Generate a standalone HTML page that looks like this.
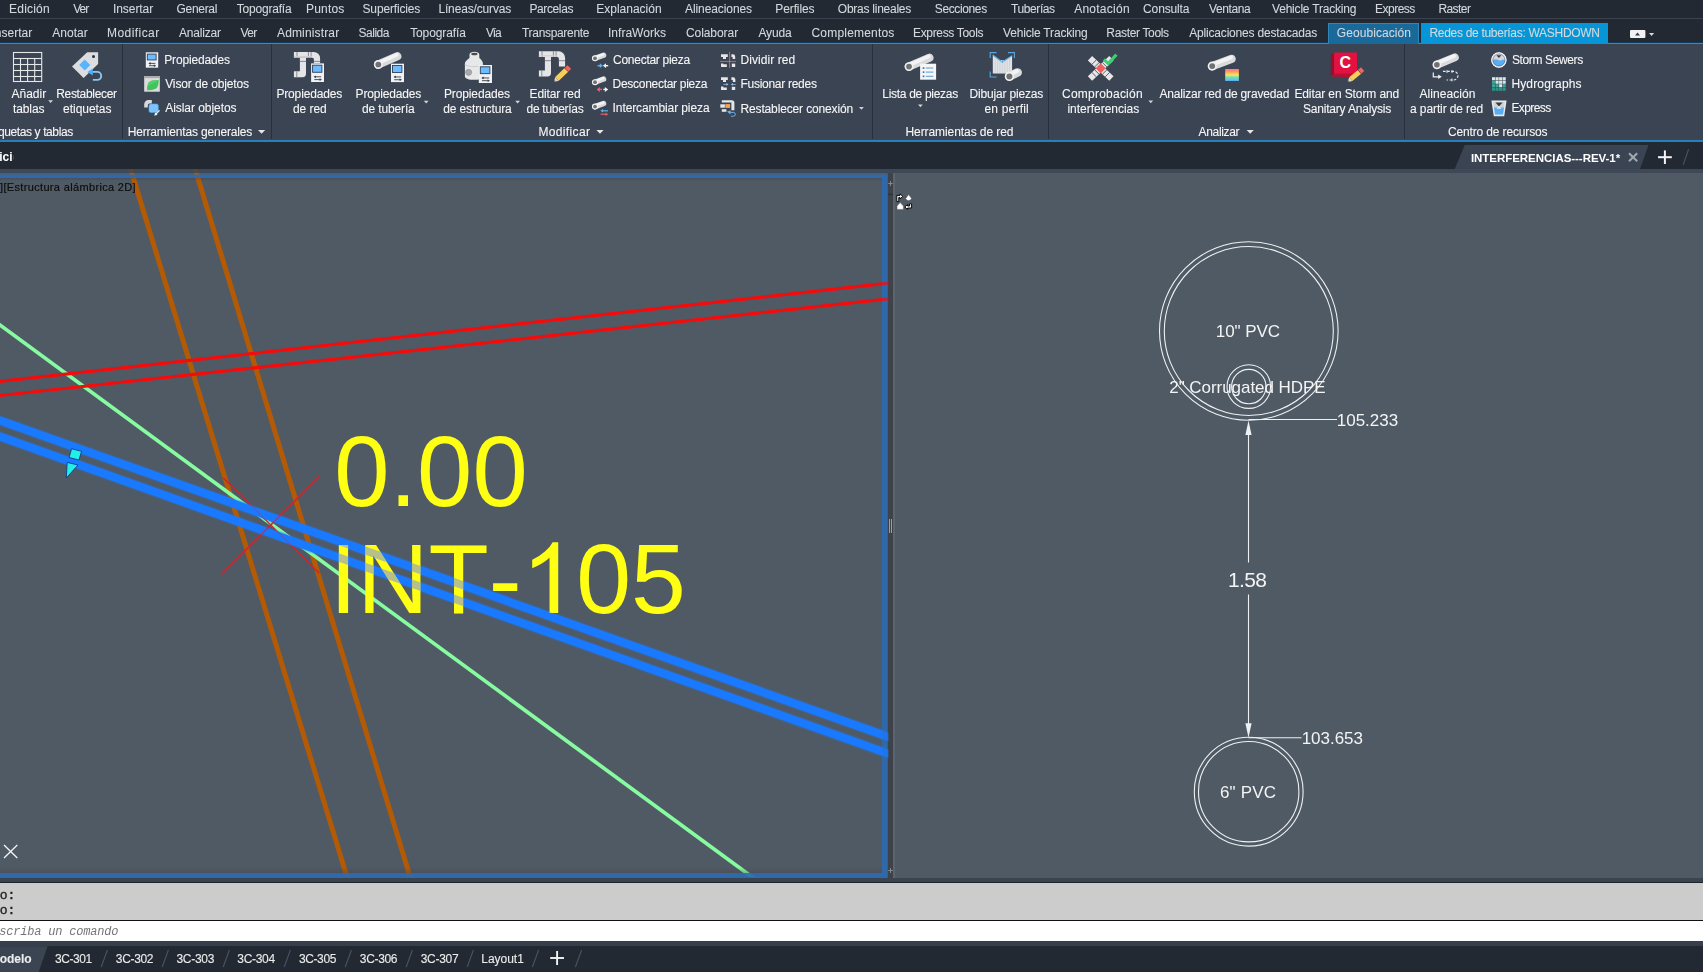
<!DOCTYPE html>
<html lang="es"><head><meta charset="utf-8"><title>Autodesk Civil 3D - INTERFERENCIAS---REV-1</title>
<style>
html,body{margin:0;padding:0;}
body{width:1703px;height:972px;overflow:hidden;position:relative;background:#222933;font-family:"Liberation Sans",sans-serif;font-size:12px;color:#f0f0f0;}
div,span,svg{position:absolute;box-sizing:border-box;}
.t{white-space:pre;line-height:1;font-family:"Liberation Sans",sans-serif;}
.m1,.m2{color:#d4d8dd;-webkit-text-stroke:0.08px #d4d8dd;}
.rb{color:#f6f6f6;-webkit-text-stroke:0.1px #f6f6f6;}
.ft{color:#ffffff;}
.vl{color:#0c0c0c;-webkit-text-stroke:0.15px #0c0c0c;}
.cm{color:#1c1c1c;-webkit-text-stroke:0.35px #1c1c1c;}
.cp{color:#757575;}
.bt{color:#ececec;-webkit-text-stroke:0.1px #ececec;}
.dv{color:#f4f4f4;}
#menubar{left:0;top:0;width:1703px;height:19px;background:#222933;border-bottom:1px solid #3a424e;}
#tabrow{left:0;top:19px;width:1703px;height:25px;}
.tab{top:4px;height:21px;}
#tab-geo{left:1328px;width:91px;background:#19699b;border:1px solid #2f86b8;border-bottom:none;}
#tab-ctx{left:1421px;width:187px;background:#0696d7;}
#ribbon{left:0;top:44px;width:1703px;height:98px;background:#3b4453;}
#tabline{left:0;top:42px;width:1703px;height:2px;background:#4586b2;border-top:1px solid #0c3c60;}
#ribbon .sep{top:0px;width:1px;height:96px;background:#29303b;}
#ribbon-line{left:0;top:139px;width:1703px;height:3px;background:#2580bc;border-top:1px solid #1d4f78;}
#filetabs{left:0;top:142px;width:1703px;height:27px;background:#222933;}
#gap1{left:0;top:169px;width:1703px;height:4px;background:rgba(59,68,83,0.8);}
#workspace{left:0;top:169px;width:1703px;height:709px;background:#4f5a65;overflow:hidden;}
#vp-left{left:-5px;top:175px;width:892px;height:703px;border:5px solid rgba(44,108,176,0.93);border-top-width:3px;}
#vp-halo{left:0;top:173px;width:887px;height:2px;background:linear-gradient(rgba(44,108,176,0.25),rgba(44,108,176,0.55));}
#vp-shadow{left:0;top:178px;width:882px;height:3px;background:linear-gradient(rgba(60,50,60,0.28),rgba(60,50,60,0));}
#vp-shadow2{left:0;top:867px;width:882px;height:6px;background:linear-gradient(rgba(70,60,60,0),rgba(70,60,60,0.3));}
#splitter{left:888px;top:173px;width:5px;height:705px;background:#3f4248;}
#splitter2{left:893px;top:173px;width:2px;height:705px;background:#5a6570;}
#below{left:0;top:878px;width:1703px;height:5px;background:#3a434e;border-bottom:1px solid #1e232b;}
#cmdhist{left:0;top:883px;width:1703px;height:37px;background:#cccccc;}
#cmdsep{left:0;top:920px;width:1703px;height:1px;background:#111;}
#cmdline{left:0;top:921px;width:1703px;height:20px;background:#ffffff;}
#status-top{left:0;top:941px;width:1703px;height:5px;background:#363f4b;}
#layouttabs{left:0;top:946px;width:1703px;height:26px;background:#222933;}
#grip{left:889px;top:519px;width:3px;height:14px;border-left:1px solid #9a9ea4;border-right:1px solid #9a9ea4;}
#labels{left:0;top:0;width:1703px;height:972px;will-change:transform;}

</style></head>
<body>
<div id="menubar"></div>
<div id="tabline"></div>
<div id="tabrow">
  <div class="tab" id="tab-geo"></div>
  <div class="tab" id="tab-ctx"></div>
</div>
<div id="ribbon">
  <div class="sep" style="left:122px"></div>
  <div class="sep" style="left:271px"></div>
  <div class="sep" style="left:872px"></div>
  <div class="sep" style="left:1048px"></div>
  <div class="sep" style="left:1404px"></div>
</div>
<div id="ribbon-line"></div>
<div id="filetabs"></div>
<div id="workspace"></div>
<div id="below"></div>
<div id="cmdhist"></div>
<div id="cmdsep"></div>
<div id="cmdline"></div>
<div id="status-top"></div>
<div id="layouttabs"></div>

<svg id="model" width="1703" height="972" viewBox="0 0 1703 972" style="left:0;top:0">
  <defs>
    <clipPath id="clipL"><rect x="0" y="169" width="886" height="708"/></clipPath>
    <clipPath id="clipR"><rect x="895" y="173" width="808" height="705"/></clipPath>
    <clipPath id="clipTxt" font-family="Liberation Sans, sans-serif" font-size="98.6">
      <text x="334.2 389.5 417.1 472.4" y="506" font-size="99.4">0.00</text>
      <text x="329.80 357.21 428.40 488.64" y="613">INT-</text>
      <path transform="translate(521.48,613) scale(0.04814,-0.04814)" d="M763 0H583V1147Q518 1085 412.5 1023Q307 961 223 930V1104Q374 1175 487 1276Q600 1377 647 1472H763Z"/>
      <text x="576.30 631.12" y="613">05</text>
    </clipPath>
  </defs>
  <g clip-path="url(#clipL)" fill="none" stroke-linecap="butt">
    <g stroke="#b45a04" stroke-width="5">
      <line x1="130.6" y1="169" x2="347.3" y2="878"/>
      <line x1="195.2" y1="169" x2="410.4" y2="878"/>
    </g>
    <line x1="-10" y1="317.7" x2="760" y2="882.8" stroke="#86fba0" stroke-width="3.7"/>
    <g stroke="#d4232f" stroke-width="1.35">
      <line x1="221.2" y1="574.5" x2="319.2" y2="476.5"/>
      <line x1="223.2" y1="477.8" x2="319.2" y2="573.2"/>
    </g>
    <g stroke="#1a7aff" stroke-width="10.4" opacity="0.28"><line x1="-10" y1="416.84" x2="897" y2="740"/><line x1="-10" y1="433.03" x2="897" y2="756.8"/></g>
    <g stroke="#1a7aff" stroke-width="8"><line x1="-10" y1="416.84" x2="897" y2="740"/><line x1="-10" y1="433.03" x2="897" y2="756.8"/></g>
    <g stroke="#f40c0c" stroke-width="3.2">
      <line x1="-10" y1="382.5" x2="895" y2="282.4"/>
      <line x1="-10" y1="396.6" x2="895" y2="298.2"/>
    </g>
    
    <g stroke="#d4232f" stroke-width="1.35">
      <line x1="221.2" y1="574.5" x2="319.2" y2="476.5" opacity="0.7"/>
      <line x1="223.2" y1="477.8" x2="319.2" y2="573.2" opacity="0.3"/>
    </g>
    <g stroke="#0b2f8a" stroke-width="0.8" fill="#22efe6">
      <polygon points="71.6,448.8 81.5,451.3 79,460 69.1,457.5"/>
      <polygon points="67.2,462.4 78,465 66.3,478"/>
    </g>
    <g fill="#ffff14" stroke="none" font-family="Liberation Sans, sans-serif" font-size="98.6">
      <text x="334.2 389.5 417.1 472.4" y="506" font-size="99.4">0.00</text>
      <text x="329.80 357.21 428.40 488.64" y="613">INT-</text>
      <path transform="translate(521.48,613) scale(0.04814,-0.04814)" d="M763 0H583V1147Q518 1085 412.5 1023Q307 961 223 930V1104Q374 1175 487 1276Q600 1377 647 1472H763Z"/>
      <text x="576.30 631.12" y="613">05</text>
    </g>
    <g clip-path="url(#clipTxt)"><g stroke="#7c8cea" stroke-width="8" opacity="0.55"><line x1="-10" y1="416.84" x2="897" y2="740"/><line x1="-10" y1="433.03" x2="897" y2="756.8"/></g></g>
    <g stroke="#f2f4f6" stroke-width="1.3"><line x1="4" y1="845" x2="17.3" y2="858"/><line x1="17.3" y1="845" x2="4" y2="858"/></g>
  </g>
  <g clip-path="url(#clipR)" fill="none" stroke="#eef0f2" stroke-width="1.1">
    <circle cx="1248.8" cy="331" r="89.3"/>
    <circle cx="1248.8" cy="331" r="84.5"/>
    <circle cx="1248.8" cy="386.6" r="21.8"/>
    <circle cx="1248.8" cy="386.6" r="17.2"/>
    <line x1="1248.5" y1="419.5" x2="1337" y2="419.5"/>
    <line x1="1248.5" y1="434" x2="1248.5" y2="562.5"/>
    <line x1="1248.5" y1="594.5" x2="1248.5" y2="724"/>
    <polygon points="1248.5,420.5 1251.6,435 1245.4,435" fill="#eef0f2" stroke="none"/>
    <polygon points="1248.5,737.8 1251.6,723.3 1245.4,723.3" fill="#eef0f2" stroke="none"/>
    <line x1="1248.5" y1="737.8" x2="1301.5" y2="737.8"/>
    <circle cx="1248.7" cy="791.7" r="54.4"/>
    <circle cx="1248.7" cy="791.7" r="50.2"/>
  </g>
</svg>
<div id="gap1"></div>
<div id="vp-left"></div><div id="vp-halo"></div><div id="vp-shadow"></div><div id="vp-shadow2"></div>
<div id="splitter"></div>
<div id="splitter2"></div>
<div id="grip"></div>
<svg id="overborder" width="1703" height="972" viewBox="0 0 1703 972" style="left:0;top:0">
  <defs><clipPath id="clipB"><rect x="881" y="178" width="7.4" height="695"/></clipPath></defs>
  <g clip-path="url(#clipB)" fill="none" opacity="0.72">
    <g stroke="#f40c0c" stroke-width="3.2"><line x1="-10" y1="382.5" x2="895" y2="282.4"/><line x1="-10" y1="396.6" x2="895" y2="298.2"/></g>
    <g stroke="#1a7aff" stroke-width="8"><line x1="-10" y1="416.84" x2="897" y2="740"/><line x1="-10" y1="433.03" x2="897" y2="756.8"/></g>
  </g>
</svg>

<svg id="chrome" width="1703" height="972" viewBox="0 0 1703 972" style="left:0;top:0">
  <!-- file tab -->
  <polygon points="1464.7,145 1648.5,145 1640,169 1454.7,169" fill="#3b4453"/>
  <g stroke="#a2a8b0" stroke-width="2" stroke-linecap="butt"><line x1="1629" y1="153.3" x2="1637.2" y2="161.2"/><line x1="1637.2" y1="153.3" x2="1629" y2="161.2"/></g>
  <g stroke="#f4f4f4" stroke-width="2"><line x1="1658" y1="157.2" x2="1671.8" y2="157.2"/><line x1="1664.9" y1="150.4" x2="1664.9" y2="164"/></g>
  <line x1="1688.6" y1="149.3" x2="1683.2" y2="164.7" stroke="#4a5261" stroke-width="1.1"/>
  <!-- tab-row minimise toggle -->
  <rect x="1630" y="30" width="15.4" height="8" rx="1" fill="#f2f2f2"/><polygon points="1635,35.6 1640,35.6 1637.5,32.6" fill="#333a46"/>
  <polygon points="1649,33 1654.2,33 1651.6,36" fill="#d5d8dc"/>
  <!-- layout tabs -->
  <polygon points="0,946.3 47.6,946.3 38.7,972 0,972" fill="#3b4453"/>
  <g stroke="#4b5362" stroke-width="1.1">
    <line x1="107.4" y1="950" x2="101.2" y2="967"/><line x1="168.4" y1="950" x2="162.2" y2="967"/><line x1="229.4" y1="950" x2="223.2" y2="967"/>
    <line x1="290.4" y1="950" x2="284.2" y2="967"/><line x1="351.4" y1="950" x2="345.2" y2="967"/><line x1="412.4" y1="950" x2="406.2" y2="967"/>
    <line x1="473.4" y1="950" x2="467.2" y2="967"/><line x1="538.6" y1="950" x2="532.4" y2="967"/><line x1="581.6" y1="950" x2="575.4" y2="967"/>
  </g>
  <g stroke="#f4f4f4" stroke-width="1.9"><line x1="550.2" y1="958" x2="564" y2="958"/><line x1="557.1" y1="951" x2="557.1" y2="965"/></g>
  <!-- splitter marks -->
  <g stroke="#8a8e96" stroke-width="0.9"><line x1="888.2" y1="183.5" x2="892.8" y2="183.5"/><line x1="890.5" y1="181" x2="890.5" y2="186"/><line x1="888.2" y1="870.5" x2="892.8" y2="870.5"/><line x1="890.5" y1="868" x2="890.5" y2="873"/></g>
  <line x1="888" y1="194.3" x2="893" y2="194.3" stroke="#2c2f35" stroke-width="1"/>
  <!-- viewport cursor badge -->
  <g id="vpcursor" fill="#ffffff" stroke="#0a0a0a" stroke-width="1" stroke-linejoin="round">
    <path d="M896.8,201.6 v-6.2 h3.2 v-1.6 l2.8,2.6 -2.8,2.6 v-1.6 h-1.2 v4.2z"/>
    <path d="M905.6,198.6 l3,-4.2 l3,4.2 a3.2,3.2 0 0 1 -6,0z" stroke="#4f5a65" stroke-width="0.6"/>
    <path d="M897,206 l3.2,-3.6 3.2,3.6 v3.4 h-6.4z" stroke="#4f5a65" stroke-width="0.5"/>
    <path d="M911.6,203.8 v4.2 h-4 v1.6 l-2.8,-2.6 2.8,-2.6 v1.6 h2 v-2.2z"/>
  </g>
</svg>

<svg id="icons" width="1703" height="972" viewBox="0 0 1703 972" style="left:0;top:0" shape-rendering="geometricPrecision">
<g id="ic-table" stroke="#e6e7e9" stroke-width="1.1" fill="none">
<rect x="13.5" y="52.5" width="28.2" height="29"/>
<line x1="13.5" y1="58.5" x2="41.7" y2="58.5"/>
<line x1="13.5" y1="64.5" x2="41.7" y2="64.5"/>
<line x1="13.5" y1="70.5" x2="41.7" y2="70.5"/>
<line x1="13.5" y1="76.5" x2="41.7" y2="76.5"/>
<line x1="20.5" y1="58.5" x2="20.5" y2="81.5"/>
<line x1="27.6" y1="58.5" x2="27.6" y2="81.5"/>
<line x1="34.7" y1="58.5" x2="34.7" y2="81.5"/>
</g>
<g id="ic-tag">
<polygon points="98.1,52.3 87.2,52.3 72,66.4 83.6,78.1 98.1,64" fill="#dcdde0"/>
<circle cx="93.5" cy="56.6" r="1.5" fill="#2b2f38"/>
<polygon points="84.7,59.5 90.3,65 84.8,70.6 79.2,65" fill="#58b4ff"/>
<path d="M92.2,71.9 h5 a4,4 0 0 1 0,8 h-4.4" fill="none" stroke="#8cc6ee" stroke-width="1.9"/>
<polygon points="87.3,72 92.8,68.6 92.8,75.4" fill="#4aaef8"/>
</g>
<g id="ic-prop"><rect x="145.8" y="52.3" width="12.4" height="15.4" fill="#f1f2f4"/><rect x="147.3" y="54.099999999999994" width="8.8" height="5.85" fill="#6cbcff" stroke="#2f3f58" stroke-width="0.9"/><g stroke="#3a3f48" stroke-width="0.9" fill="#3a3f48"><line x1="149.0" y1="63.39" x2="155.4" y2="63.39"/><line x1="149.0" y1="65.70" x2="155.4" y2="65.70"/><polygon points="148.4,63.39 150.60000000000002,61.99 150.60000000000002,64.79" stroke="none"/><polygon points="156.00000000000003,65.70 153.8,64.30 153.8,67.10" stroke="none"/></g></g>
<g id="ic-visor"><rect x="144.2" y="76.1" width="15.6" height="15.6" fill="#dcdcde"/><rect x="144.2" y="76.1" width="15.6" height="2" fill="#a9aaad"/>
<path d="M158.6,80 c-4,-0.2 -8.6,0.4 -10,2.6 c-1.4,2.4 -1.6,5.2 -1.5,7.6 c4,0.3 8.4,-0.3 10,-2.6 c1.3,-2.2 1.6,-5 1.5,-7.6z" fill="#43c35a"/><path d="M158.6,80 c-4,-0.2 -8.6,0.4 -10,2.6 l-1,4 c3,-3 8,-3.4 11,-6.6z" fill="#5fd873" opacity="0.6"/></g>
<g id="ic-aislar"><path d="M144.2,107.6 v-3.2 a4.4,4.4 0 0 1 4.4,-4.4 h3.2 v3.6 h-2.4 a1.6,1.6 0 0 0 -1.6,1.6 v2.4z" fill="#d9dadc"/>
<rect x="149" y="104" width="9.3" height="8.6" rx="1.8" fill="#7cc3ff"/><rect x="149" y="104" width="9.3" height="8.6" rx="1.8" fill="none" stroke="#5aa6e8" stroke-width="0.6"/>
<line x1="159.6" y1="110.3" x2="155.6" y2="114.4" stroke="#f4f4f4" stroke-width="1.2"/><polygon points="154.2,115.8 155.2,112.4 157.6,114.8" fill="#f4f4f4"/></g>
<g id="ic-netprop"><g fill="#e4e5e7"><path d="M293.9,52 H313.70 A6.4,6.4 0 0 1 320.10,58.40 V63.20 H313.90 V59.60 A1.7,1.7 0 0 0 312.20,57.80 H293.9 Z"/><path d="M299.90,57.80 H306.00 V73.80 A3.4,3.4 0 0 1 302.60,77.20 H293.9 V71.30 H299.90 Z"/></g><g stroke="#7d7f84" stroke-width="0.9"><line x1="297.00" y1="52" x2="297.00" y2="57.80"/><line x1="308.40" y1="52" x2="308.40" y2="57.80"/><line x1="311.10" y1="52" x2="311.10" y2="57.80"/><line x1="299.90" y1="61.40" x2="306.00" y2="61.40"/><line x1="313.90" y1="61.40" x2="320.10" y2="61.40"/><line x1="296.80" y1="71.30" x2="296.80" y2="77.20"/></g><path d="M293.9,56.50 H312.20" stroke="#cfd0d3" stroke-width="1.2" fill="none"/><rect x="311.1" y="63.4" width="12.9" height="18.6" fill="#f1f2f4"/><rect x="312.6" y="65.2" width="9.3" height="7.07" fill="#6cbcff" stroke="#2f3f58" stroke-width="0.9"/><g stroke="#3a3f48" stroke-width="0.9" fill="#3a3f48"><line x1="314.3" y1="76.79" x2="321.2" y2="76.79"/><line x1="314.3" y1="79.58" x2="321.2" y2="79.58"/><polygon points="313.70000000000005,76.79 315.90000000000003,75.39 315.90000000000003,78.19" stroke="none"/><polygon points="321.8,79.58 319.6,78.18 319.6,80.98" stroke="none"/></g></g>
<g id="ic-pipeprop"><line x1="378.3" y1="64.5" x2="397.29" y2="56.14" stroke="#d9dadc" stroke-width="8.2" stroke-linecap="round"/><line x1="377.72" y1="63.19" x2="396.71" y2="54.83" stroke="#f3f3f4" stroke-width="3.69" stroke-linecap="round"/><circle cx="378.3" cy="64.5" r="4.45" fill="#efeff1"/><circle cx="378.3" cy="64.5" r="2.87" fill="#707173"/><rect x="391" y="63.7" width="13" height="18.4" fill="#f1f2f4"/><rect x="392.5" y="65.5" width="9.4" height="6.99" fill="#6cbcff" stroke="#2f3f58" stroke-width="0.9"/><g stroke="#3a3f48" stroke-width="0.9" fill="#3a3f48"><line x1="394.2" y1="76.95" x2="401.2" y2="76.95"/><line x1="394.2" y1="79.71" x2="401.2" y2="79.71"/><polygon points="393.6,76.95 395.8,75.55 395.8,78.35" stroke="none"/><polygon points="401.8,79.71 399.6,78.31 399.6,81.11" stroke="none"/></g></g>
<g id="ic-structprop">
<path d="M464.9,64 c0,-3 3,-4.6 4.6,-6 v-3.6 c0,-3.4 9.8,-3.4 9.8,0 v3.6 c1.6,1.4 3.7,3 3.7,6 v12.4 c0,4.6 -18.1,4.6 -18.1,0z" fill="#e7e8ea"/>
<path d="M464.9,64 c0,3.4 18.1,3.4 18.1,0" fill="none" stroke="#c4c5c8" stroke-width="0.8"/>
<ellipse cx="474.4" cy="54" rx="3.2" ry="1.3" fill="#4a4c50"/>
<circle cx="468.6" cy="72.3" r="3.1" fill="#a7a8ab" stroke="#8a8b8e" stroke-width="0.5"/>
<rect x="478.8" y="65" width="13.2" height="18" fill="#f1f2f4"/><rect x="480.3" y="66.8" width="9.6" height="6.84" fill="#6cbcff" stroke="#2f3f58" stroke-width="0.9"/><g stroke="#3a3f48" stroke-width="0.9" fill="#3a3f48"><line x1="482.0" y1="77.96" x2="489.2" y2="77.96"/><line x1="482.0" y1="80.66" x2="489.2" y2="80.66"/><polygon points="481.40000000000003,77.96 483.6,76.56 483.6,79.36" stroke="none"/><polygon points="489.8,80.66 487.6,79.26 487.6,82.06" stroke="none"/></g>
</g>
<g id="ic-editnet"><g fill="#e4e5e7"><path d="M538.9,51.3 H558.70 A6.4,6.4 0 0 1 565.10,57.70 V66.50 H558.90 V58.90 A1.7,1.7 0 0 0 557.20,57.10 H538.9 Z"/><path d="M544.90,57.10 H551.00 V73.10 A3.4,3.4 0 0 1 547.60,76.50 H538.9 V70.60 H544.90 Z"/></g><g stroke="#7d7f84" stroke-width="0.9"><line x1="542.00" y1="51.3" x2="542.00" y2="57.10"/><line x1="553.40" y1="51.3" x2="553.40" y2="57.10"/><line x1="556.10" y1="51.3" x2="556.10" y2="57.10"/><line x1="544.90" y1="60.70" x2="551.00" y2="60.70"/><line x1="558.90" y1="60.70" x2="565.10" y2="60.70"/><line x1="541.80" y1="70.60" x2="541.80" y2="76.50"/></g><path d="M538.9,55.80 H557.20" stroke="#cfd0d3" stroke-width="1.2" fill="none"/><polygon points="554.00,81.90 558.82,80.83 555.19,77.11" fill="#d8d8d8"/><polygon points="554.00,81.90 555.84,81.49 554.46,80.08" fill="#5a5a5a"/><polygon points="558.82,80.83 568.25,71.65 564.62,67.93 555.19,77.11" fill="#f6cf5a"/><polygon points="568.25,71.65 571.11,68.86 567.49,65.14 564.62,67.93" fill="#ef6464"/><line x1="568.25" y1="71.65" x2="564.62" y2="67.93" stroke="#7a3030" stroke-width="0.7"/></g>
<g id="ic-conectar"><line x1="595" y1="58.3" x2="603.57" y2="55.18" stroke="#d9dadc" stroke-width="5.4" stroke-linecap="round"/><line x1="594.68" y1="57.41" x2="603.25" y2="54.29" stroke="#f3f3f4" stroke-width="2.43" stroke-linecap="round"/><circle cx="595" cy="58.3" r="3.05" fill="#efeff1"/><circle cx="595" cy="58.3" r="1.89" fill="#707173"/>
<g><line x1="597.5" y1="65.7" x2="601" y2="65.7" stroke="#5bb4f2" stroke-width="1.4"/><polygon points="602.9,65.7 599.8,63.3 599.8,68.1" fill="#5bb4f2"/>
<line x1="608.2" y1="65.7" x2="604.8" y2="65.7" stroke="#f2f2f2" stroke-width="1.4"/><polygon points="602.9,65.7 606,63.3 606,68.1" fill="#f2f2f2"/></g></g>
<g id="ic-desconectar"><line x1="595" y1="82.2" x2="603.57" y2="79.08" stroke="#d9dadc" stroke-width="5.4" stroke-linecap="round"/><line x1="594.68" y1="81.31" x2="603.25" y2="78.19" stroke="#f3f3f4" stroke-width="2.43" stroke-linecap="round"/><circle cx="595" cy="82.2" r="3.05" fill="#efeff1"/><circle cx="595" cy="82.2" r="1.89" fill="#707173"/>
<g><line x1="598.6" y1="89.4" x2="602" y2="89.4" stroke="#f05c64" stroke-width="1.4"/><polygon points="596.6,89.4 599.9,86.9 599.9,91.9" fill="#f05c64"/>
<line x1="603.4" y1="89.4" x2="606" y2="89.4" stroke="#f2f2f2" stroke-width="1.4"/><polygon points="608.2,89.4 604.9,86.9 604.9,91.9" fill="#f2f2f2"/></g></g>
<g id="ic-intercambiar"><line x1="595" y1="106.6" x2="603.57" y2="103.48" stroke="#d9dadc" stroke-width="5.4" stroke-linecap="round"/><line x1="594.68" y1="105.71" x2="603.25" y2="102.59" stroke="#f3f3f4" stroke-width="2.43" stroke-linecap="round"/><circle cx="595" cy="106.6" r="3.05" fill="#efeff1"/><circle cx="595" cy="106.6" r="1.89" fill="#707173"/>
<g><line x1="602.4" y1="110.8" x2="608" y2="110.8" stroke="#5bb4f2" stroke-width="1.2"/><polygon points="600.4,110.8 603,109 603,112.6" fill="#5bb4f2"/>
<line x1="600.6" y1="114.2" x2="606" y2="114.2" stroke="#f05c64" stroke-width="1.2"/><polygon points="608.2,114.2 605.6,112.4 605.6,116" fill="#f05c64"/></g></g>
<g id="ic-dividir" fill="#e6e6e9">
<path d="M721,54.3 h6.8 v2.6 h-1.8 v2.2 h-3 v-2.2 h-2z"/>
<path d="M731.4,54.3 h1.4 a2.4,2.4 0 0 1 2.4,2.4 v2.4 h-2.6 v-2.2 h-1.2z"/>
<path d="M721,63.4 h2.4 v0.8 h3.4 v2.8 h-5.8z"/>
<rect x="731.8" y="63.6" width="3.4" height="3.4"/>
<line x1="729.6" y1="51.8" x2="729.6" y2="68" stroke="#e8616f" stroke-width="0.9"/><line x1="720" y1="61.4" x2="736" y2="61.4" stroke="#e8616f" stroke-width="0.9"/>
</g>
<g id="ic-fusionar" fill="#e6e6e9">
<path d="M721,77.3 h6.8 v2.6 h-1.8 v2.2 h-3 v-2.2 h-2z"/>
<path d="M731.4,77.3 h1.6 a2.4,2.4 0 0 1 2.4,2.4 v2.2 h-2.6 v-2 h-1.4z"/>
<path d="M721,86.6 h2.4 v0.8 h3.4 v2.6 h-5.8z"/>
<rect x="731.8" y="86.8" width="3.4" height="3.2"/>
<g stroke="#8cc3f0" stroke-width="0.8" fill="#8cc3f0"><line x1="723.4" y1="84.4" x2="727" y2="84.4"/><polygon points="728.6,84.4 726.4,83 726.4,85.8" stroke="none"/><line x1="735.8" y1="84.4" x2="732.4" y2="84.4"/><polygon points="730.8,84.4 733,83 733,85.8" stroke="none"/></g>
</g>
<g id="ic-reconex">
<path d="M721.8,100.2 h10 a2.6,2.6 0 0 1 2.6,2.6 v7.4 h-3 v-7.6 h-9.6z" fill="#e6e6e9"/>
<rect x="720.3" y="104.3" width="4.6" height="3.4" fill="#e6e6e9"/><rect x="725.3" y="104.1" width="4.8" height="3.8" fill="#f0a848"/>
<path d="M721.8,109.2 h4.6 v2.6 h-4.6z" fill="#e6e6e9"/>
<path d="M730.4,112.4 h3 a1.9,1.9 0 0 1 0,3.8 h-2.4" fill="none" stroke="#6cb4ee" stroke-width="1"/><polygon points="727,111.4 730.8,110.4 730.4,114.4" fill="#6cb4ee"/>
</g>
<g id="ic-lista"><line x1="909" y1="66.6" x2="929.39" y2="57.74" stroke="#d9dadc" stroke-width="8.2" stroke-linecap="round"/><line x1="908.43" y1="65.28" x2="928.82" y2="56.42" stroke="#f3f3f4" stroke-width="3.69" stroke-linecap="round"/><circle cx="909" cy="66.6" r="4.45" fill="#efeff1"/><circle cx="909" cy="66.6" r="2.87" fill="#707173"/>
<rect x="920.1" y="63.7" width="16" height="16" fill="#f4f6f8"/>
<rect x="922.7" y="67.2" width="1.7" height="1.7" fill="#3b78b4"/><line x1="925.8" y1="68" x2="933.3" y2="68" stroke="#4a8fd0" stroke-width="0.9"/>
<rect x="922.7" y="71.3" width="1.7" height="1.7" fill="#3b78b4"/><line x1="925.8" y1="72.1" x2="933.3" y2="72.1" stroke="#4a8fd0" stroke-width="0.9"/>
<rect x="922.7" y="75.5" width="1.7" height="1.7" fill="#3b78b4"/><line x1="925.8" y1="76.3" x2="933.3" y2="76.3" stroke="#4a8fd0" stroke-width="0.9"/>
</g>
<g id="ic-dibujar">
<g fill="none" stroke="#5ba4dc" stroke-width="1.1"><path d="M990.2,58 v-5.4 h6.4"/><path d="M1008,52.6 h6.4 v5.4"/><path d="M990.2,71.4 v5.6 h6.4"/></g>
<polygon points="992.8,55 1002.3,62 1012.1,55.6 1012.1,73.6 992.8,73.6" fill="#dfe2e6"/>
<clipPath id="cpProf"><polygon points="992.8,55 1002.3,62 1012.1,55.6 1012.1,73.6 992.8,73.6"/></clipPath><g stroke="#c3c7cc" stroke-width="0.6" clip-path="url(#cpProf)"><line x1="995.2" y1="58" x2="995.2" y2="73.6"/><line x1="997.6" y1="58" x2="997.6" y2="73.6"/><line x1="1000.0" y1="58" x2="1000.0" y2="73.6"/><line x1="1002.4" y1="58" x2="1002.4" y2="73.6"/><line x1="1004.8" y1="58" x2="1004.8" y2="73.6"/><line x1="1007.2" y1="58" x2="1007.2" y2="73.6"/><line x1="1009.6" y1="58" x2="1009.6" y2="73.6"/></g>
<polyline points="992.8,55 1002.3,62 1012.1,55.6" fill="none" stroke="#5ba4dc" stroke-width="1.1"/><rect x="1001.1" y="60.5" width="2.6" height="2.6" fill="#5ba4dc" stroke="#dff0ff" stroke-width="0.5"/>
<line x1="1009.4" y1="76.4" x2="1017.61" y2="72.47" stroke="#d9dadc" stroke-width="8.6" stroke-linecap="round"/><line x1="1008.75" y1="75.04" x2="1016.96" y2="71.11" stroke="#f3f3f4" stroke-width="3.87" stroke-linecap="round"/><circle cx="1009.4" cy="76.4" r="4.65" fill="#efeff1"/><circle cx="1009.4" cy="76.4" r="3.01" fill="#707173"/>
</g>
<g id="ic-compro">
<g stroke="#e7e7e9" stroke-width="6.2"><line x1="1090" y1="58.2" x2="1111.4" y2="78.6"/><line x1="1111.4" y1="58.2" x2="1090" y2="78.6"/></g>
<g stroke="#4a5262" stroke-width="0.9"><line x1="1091.7" y1="64.5" x2="1096.3" y2="60"/><line x1="1105.2" y1="60" x2="1109.8" y2="64.5"/><line x1="1091.7" y1="72.3" x2="1096.3" y2="76.8"/><line x1="1105.2" y1="76.8" x2="1109.8" y2="72.3"/>
<line x1="1094.4" y1="67.2" x2="1099" y2="62.7"/><line x1="1102.5" y1="62.7" x2="1107.1" y2="67.2"/><line x1="1094.4" y1="69.6" x2="1099" y2="74.1"/><line x1="1102.5" y1="74.1" x2="1107.1" y2="69.6"/></g>
<polygon points="1100.7,63.2 1105.7,68.3 1100.7,73.4 1095.7,68.3" fill="#f0605e"/>
<polyline points="1103.9,59.3 1108.2,63.5 1116.4,54.6" fill="none" stroke="#3bcf6f" stroke-width="3.1"/>
</g>
<g id="ic-analizar"><line x1="1212.2" y1="66.1" x2="1231.57" y2="58.88" stroke="#d9dadc" stroke-width="8.4" stroke-linecap="round"/><line x1="1211.69" y1="64.72" x2="1231.06" y2="57.50" stroke="#f3f3f4" stroke-width="3.78" stroke-linecap="round"/><circle cx="1212.2" cy="66.1" r="4.55" fill="#efeff1"/><circle cx="1212.2" cy="66.1" r="2.94" fill="#707173"/>
<linearGradient id="rb" x1="0" y1="0" x2="0" y2="1"><stop offset="0" stop-color="#ff7f70"/><stop offset="0.16" stop-color="#ff8a6e"/><stop offset="0.34" stop-color="#ffb862"/><stop offset="0.5" stop-color="#f1e874"/><stop offset="0.68" stop-color="#78e592"/><stop offset="0.86" stop-color="#63c6f6"/><stop offset="1" stop-color="#5fbcff"/></linearGradient>
<rect x="1225.2" y="69" width="13.7" height="11.9" fill="url(#rb)"/>
</g>
<g id="ic-storm">
<polygon points="1330.8,55.2 1334.1,52.5 1334.1,73.6 1330.8,76.4" fill="#9c0c2c"/>
<polygon points="1330.8,76.4 1334.1,73.6 1357,73.6 1353.6,77.2" fill="#b80f34"/>
<rect x="1334.1" y="52.5" width="22.9" height="21.1" fill="#e2113f"/>
<text x="1345.4" y="68.2" text-anchor="middle" font-family="Liberation Sans, sans-serif" font-weight="bold" font-size="16" fill="#ffffff">C</text>
<polygon points="1347.60,81.90 1352.42,81.09 1349.19,77.28" fill="#d8d8d8"/><polygon points="1347.60,81.90 1349.43,81.59 1348.21,80.14" fill="#5a5a5a"/><polygon points="1352.42,81.09 1361.16,73.69 1357.93,69.88 1349.19,77.28" fill="#f6cf5a"/><polygon points="1361.16,73.69 1364.22,71.11 1360.98,67.29 1357.93,69.88" fill="#ef6464"/><line x1="1361.16" y1="73.69" x2="1357.93" y2="69.88" stroke="#7a3030" stroke-width="0.7"/>
</g>
<g id="ic-alineacion"><line x1="1436.9" y1="64.8" x2="1454.79" y2="57.32" stroke="#d9dadc" stroke-width="8" stroke-linecap="round"/><line x1="1436.36" y1="63.51" x2="1454.25" y2="56.03" stroke="#f3f3f4" stroke-width="3.60" stroke-linecap="round"/><circle cx="1436.9" cy="64.8" r="4.35" fill="#efeff1"/><circle cx="1436.9" cy="64.8" r="2.80" fill="#707173"/>
<path d="M1433.3,72.4 v4.4 h5.6" fill="none" stroke="#f0f0f0" stroke-width="1.2"/><polygon points="1441.8,76.8 1438.2,74.6 1438.2,79" fill="#f0f0f0"/>
<path d="M1443,71.4 h10.6 a4.3,4.3 0 0 1 0,8.6 h-7" fill="none" stroke="#e6eff8" stroke-width="1.15" stroke-dasharray="2.6 1.6"/>
<g stroke="#e6eff8" stroke-width="0.9"><line x1="1447" y1="70" x2="1447" y2="73"/><line x1="1452" y1="70" x2="1452" y2="73"/><line x1="1452" y1="78.4" x2="1452" y2="81.4"/></g>
</g>
<g id="ic-ss"><circle cx="1498.9" cy="60" r="7.6" fill="#e9eaec"/><circle cx="1498.9" cy="60" r="6.2" fill="#d4d6d9"/>
<path d="M1492.7,60.2 a6.2,6.2 0 0 0 12.4,0 c-2,-1.4 -4,1 -6.2,0 c-2.2,-1 -4.2,-1.2 -6.2,0z" fill="#58aef2"/>
<polygon points="1496.4,55.2 1501.4,55.2 1498.9,58" fill="#3a3d44"/><circle cx="1498.9" cy="60" r="7.1" fill="none" stroke="#f6f6f7" stroke-width="1.1"/><circle cx="1498.9" cy="60" r="6.1" fill="none" stroke="#4a5668" stroke-width="0.5"/></g>
<g id="ic-hydro">
<rect x="1492.00" y="77.20" width="3.1" height="3.05" fill="#d9e6e4"/>
<rect x="1495.55" y="77.20" width="3.1" height="3.05" fill="#d9e6e4"/>
<rect x="1499.10" y="77.20" width="3.1" height="3.05" fill="#d9e6e4"/>
<rect x="1502.65" y="77.20" width="3.1" height="3.05" fill="#d9e6e4"/>
<rect x="1492.00" y="80.70" width="3.1" height="3.05" fill="#3aa79a"/>
<rect x="1495.55" y="80.70" width="3.1" height="3.05" fill="#d9e6e4"/>
<rect x="1499.10" y="80.70" width="3.1" height="3.05" fill="#d9e6e4"/>
<rect x="1502.65" y="80.70" width="3.1" height="3.05" fill="#d9e6e4"/>
<rect x="1492.00" y="84.20" width="3.1" height="3.05" fill="#3aa79a"/>
<rect x="1495.55" y="84.20" width="3.1" height="3.05" fill="#3aa79a"/>
<rect x="1499.10" y="84.20" width="3.1" height="3.05" fill="#d9e6e4"/>
<rect x="1502.65" y="84.20" width="3.1" height="3.05" fill="#3aa79a"/>
<rect x="1492.00" y="87.70" width="3.1" height="3.05" fill="#2f9488"/>
<rect x="1495.55" y="87.70" width="3.1" height="3.05" fill="#2f9488"/>
<rect x="1499.10" y="87.70" width="3.1" height="3.05" fill="#2f9488"/>
<rect x="1502.65" y="87.70" width="3.1" height="3.05" fill="#2f9488"/>
</g>
<g id="ic-express"><polygon points="1491.4,100.4 1506.6,100.4 1504.2,116.2 1493.8,116.2" fill="#e9eaec"/>
<polygon points="1493.2,102 1504.8,102 1503,114.6 1495,114.6" fill="#cfd2d6"/>
<polygon points="1494,107.6 1504,107.6 1503,114.6 1495,114.6" fill="#58aef2"/>
<polygon points="1495.4,102.4 1502.6,102.4 1499,106.6" fill="#3a3d44"/><polygon points="1496.4,108.8 1501.6,108.8 1499,106" fill="#e9eaec"/></g>
<g id="dropdowns">
<polygon points="48.2,100.2 53.0,100.2 50.6,103.0" fill="#d0d3d8"/>
<polygon points="423.8,100.8 428.6,100.8 426.2,103.6" fill="#d0d3d8"/>
<polygon points="515.2,100.8 520.0,100.8 517.6,103.6" fill="#d0d3d8"/>
<polygon points="1148.4,100.4 1153.2,100.4 1150.8000000000002,103.2" fill="#d0d3d8"/>
<polygon points="918,104.4 922.8,104.4 920.4,107.2" fill="#d0d3d8"/>
<polygon points="859,107 863.8,107 861.4,109.8" fill="#d0d3d8"/>
<polygon points="258,130 265.2,130 261.6,133.8" fill="#e4e6ea"/>
<polygon points="596.4,130 603.6,130 600.0,133.8" fill="#e4e6ea"/>
<polygon points="1246.6,130 1253.8,130 1250.1999999999998,133.8" fill="#e4e6ea"/>
</g>
</svg>
<div id="labels">
<span class="t m1" style="left:9.10px;top:3.00px;font-size:12px;letter-spacing:0.183px;">Edición</span>
<span class="t m1" style="left:73.20px;top:3.00px;font-size:12px;letter-spacing:-1.025px;">Ver</span>
<span class="t m1" style="left:113.00px;top:3.00px;font-size:12px;letter-spacing:-0.071px;">Insertar</span>
<span class="t m1" style="left:176.50px;top:3.00px;font-size:12px;letter-spacing:-0.300px;">General</span>
<span class="t m1" style="left:236.75px;top:3.00px;font-size:12px;letter-spacing:-0.200px;">Topografía</span>
<span class="t m1" style="left:306.00px;top:3.00px;font-size:12px;letter-spacing:0.200px;">Puntos</span>
<span class="t m1" style="left:362.50px;top:3.00px;font-size:12px;letter-spacing:-0.150px;">Superficies</span>
<span class="t m1" style="left:438.40px;top:3.00px;font-size:12px;letter-spacing:-0.146px;">Líneas/curvas</span>
<span class="t m1" style="left:529.40px;top:3.00px;font-size:12px;letter-spacing:-0.379px;">Parcelas</span>
<span class="t m1" style="left:596.30px;top:3.00px;font-size:12px;letter-spacing:-0.010px;">Explanación</span>
<span class="t m1" style="left:685.00px;top:3.00px;font-size:12px;letter-spacing:-0.086px;">Alineaciones</span>
<span class="t m1" style="left:775.30px;top:3.00px;font-size:12px;letter-spacing:-0.114px;">Perfiles</span>
<span class="t m1" style="left:837.80px;top:3.00px;font-size:12px;letter-spacing:-0.250px;">Obras lineales</span>
<span class="t m1" style="left:934.80px;top:3.00px;font-size:12px;letter-spacing:-0.375px;">Secciones</span>
<span class="t m1" style="left:1011.05px;top:3.00px;font-size:12px;letter-spacing:-0.407px;">Tuberías</span>
<span class="t m1" style="left:1074.20px;top:3.00px;font-size:12px;letter-spacing:0.250px;">Anotación</span>
<span class="t m1" style="left:1143.10px;top:3.00px;font-size:12px;letter-spacing:-0.143px;">Consulta</span>
<span class="t m1" style="left:1209.00px;top:3.00px;font-size:12px;letter-spacing:-0.383px;">Ventana</span>
<span class="t m1" style="left:1272.00px;top:3.00px;font-size:12px;letter-spacing:-0.193px;">Vehicle Tracking</span>
<span class="t m1" style="left:1375.00px;top:3.00px;font-size:12px;letter-spacing:-0.500px;">Express</span>
<span class="t m1" style="left:1438.40px;top:3.00px;font-size:12px;letter-spacing:-0.570px;">Raster</span>
<span class="t m2" style="left:-8.50px;top:27.00px;font-size:12px;">Insertar</span>
<span class="t m2" style="left:52.30px;top:27.00px;font-size:12px;letter-spacing:0.010px;">Anotar</span>
<span class="t m2" style="left:107.00px;top:27.00px;font-size:12px;letter-spacing:0.438px;">Modificar</span>
<span class="t m2" style="left:179.00px;top:27.00px;font-size:12px;letter-spacing:-0.179px;">Analizar</span>
<span class="t m2" style="left:240.60px;top:27.00px;font-size:12px;letter-spacing:-0.675px;">Ver</span>
<span class="t m2" style="left:277.00px;top:27.00px;font-size:12px;letter-spacing:0.150px;">Administrar</span>
<span class="t m2" style="left:358.50px;top:27.00px;font-size:12px;letter-spacing:-0.480px;">Salida</span>
<span class="t m2" style="left:410.15px;top:27.00px;font-size:12px;letter-spacing:-0.100px;">Topografía</span>
<span class="t m2" style="left:486.00px;top:27.00px;font-size:12px;letter-spacing:-1.200px;">Vía</span>
<span class="t m2" style="left:522.05px;top:27.00px;font-size:12px;letter-spacing:-0.323px;">Transparente</span>
<span class="t m2" style="left:608.00px;top:27.00px;font-size:12px;letter-spacing:0.022px;">InfraWorks</span>
<span class="t m2" style="left:685.90px;top:27.00px;font-size:12px;letter-spacing:-0.050px;">Colaborar</span>
<span class="t m2" style="left:758.40px;top:27.00px;font-size:12px;letter-spacing:-0.112px;">Ayuda</span>
<span class="t m2" style="left:811.50px;top:27.00px;font-size:12px;letter-spacing:0.195px;">Complementos</span>
<span class="t m2" style="left:913.00px;top:27.00px;font-size:12px;letter-spacing:-0.333px;">Express Tools</span>
<span class="t m2" style="left:1003.00px;top:27.00px;font-size:12px;letter-spacing:-0.180px;">Vehicle Tracking</span>
<span class="t m2" style="left:1106.30px;top:27.00px;font-size:12px;letter-spacing:-0.336px;">Raster Tools</span>
<span class="t m2" style="left:1189.30px;top:27.00px;font-size:12px;letter-spacing:-0.193px;">Aplicaciones destacadas</span>
<span class="t m2" style="left:1336.80px;top:27.00px;font-size:12px;letter-spacing:0.064px;">Geoubicación</span>
<span class="t m2" style="left:1429.40px;top:27.00px;font-size:12px;letter-spacing:-0.294px;">Redes de tuberías: WASHDOWN</span>
<span class="t rb" style="left:11.50px;top:87.50px;font-size:12px;">Añadir</span>
<span class="t rb" style="left:12.95px;top:102.50px;font-size:12px;letter-spacing:-0.090px;">tablas</span>
<span class="t rb" style="left:56.20px;top:87.50px;font-size:12px;letter-spacing:-0.320px;">Restablecer</span>
<span class="t rb" style="left:63.10px;top:102.50px;font-size:12px;letter-spacing:-0.044px;">etiquetas</span>
<span class="t rb" style="left:-2.00px;top:125.50px;font-size:12px;letter-spacing:-0.396px;">quetas y tablas</span>
<span class="t rb" style="left:164.20px;top:54.00px;font-size:12px;letter-spacing:-0.150px;">Propiedades</span>
<span class="t rb" style="left:165.20px;top:78.00px;font-size:12px;letter-spacing:-0.127px;">Visor de objetos</span>
<span class="t rb" style="left:165.20px;top:102.00px;font-size:12px;letter-spacing:-0.050px;">Aislar objetos</span>
<span class="t rb" style="left:127.70px;top:125.50px;font-size:12px;letter-spacing:-0.164px;">Herramientas generales</span>
<span class="t rb" style="left:276.40px;top:87.50px;font-size:12px;letter-spacing:-0.150px;">Propiedades</span>
<span class="t rb" style="left:293.00px;top:102.50px;font-size:12px;letter-spacing:-0.070px;">de red</span>
<span class="t rb" style="left:355.60px;top:87.50px;font-size:12px;letter-spacing:-0.170px;">Propiedades</span>
<span class="t rb" style="left:362.10px;top:102.50px;font-size:12px;letter-spacing:-0.156px;">de tubería</span>
<span class="t rb" style="left:444.00px;top:87.50px;font-size:12px;letter-spacing:-0.130px;">Propiedades</span>
<span class="t rb" style="left:443.30px;top:102.50px;font-size:12px;letter-spacing:-0.133px;">de estructura</span>
<span class="t rb" style="left:529.60px;top:87.50px;font-size:12px;letter-spacing:-0.117px;">Editar red</span>
<span class="t rb" style="left:526.50px;top:102.50px;font-size:12px;letter-spacing:-0.285px;">de tuberías</span>
<span class="t rb" style="left:538.40px;top:125.50px;font-size:12px;letter-spacing:0.362px;">Modificar</span>
<span class="t rb" style="left:613.10px;top:54.00px;font-size:12px;letter-spacing:-0.281px;">Conectar pieza</span>
<span class="t rb" style="left:612.60px;top:78.00px;font-size:12px;letter-spacing:-0.288px;">Desconectar pieza</span>
<span class="t rb" style="left:612.60px;top:102.00px;font-size:12px;letter-spacing:-0.103px;">Intercambiar pieza</span>
<span class="t rb" style="left:740.50px;top:54.00px;font-size:12px;letter-spacing:0.065px;">Dividir red</span>
<span class="t rb" style="left:740.50px;top:78.00px;font-size:12px;letter-spacing:-0.281px;">Fusionar redes</span>
<span class="t rb" style="left:740.50px;top:102.70px;font-size:12px;letter-spacing:-0.145px;">Restablecer conexión</span>
<span class="t rb" style="left:882.30px;top:87.50px;font-size:12px;letter-spacing:-0.296px;">Lista de piezas</span>
<span class="t rb" style="left:969.60px;top:87.50px;font-size:12px;letter-spacing:-0.188px;">Dibujar piezas</span>
<span class="t rb" style="left:984.50px;top:102.50px;font-size:12px;letter-spacing:0.188px;">en perfil</span>
<span class="t rb" style="left:905.50px;top:125.50px;font-size:12px;letter-spacing:-0.078px;">Herramientas de red</span>
<span class="t rb" style="left:1062.00px;top:87.50px;font-size:12px;letter-spacing:0.232px;">Comprobación</span>
<span class="t rb" style="left:1067.45px;top:102.50px;font-size:12px;letter-spacing:-0.015px;">interferencias</span>
<span class="t rb" style="left:1159.40px;top:87.50px;font-size:12px;letter-spacing:-0.176px;">Analizar red de gravedad</span>
<span class="t rb" style="left:1294.40px;top:87.50px;font-size:12px;letter-spacing:-0.106px;">Editar en Storm and</span>
<span class="t rb" style="left:1302.90px;top:102.50px;font-size:12px;letter-spacing:-0.188px;">Sanitary Analysis</span>
<span class="t rb" style="left:1198.60px;top:125.50px;font-size:12px;letter-spacing:-0.350px;">Analizar</span>
<span class="t rb" style="left:1419.50px;top:87.50px;font-size:12px;letter-spacing:0.067px;">Alineación</span>
<span class="t rb" style="left:1410.10px;top:102.50px;font-size:12px;letter-spacing:-0.114px;">a partir de red</span>
<span class="t rb" style="left:1511.90px;top:54.00px;font-size:12px;letter-spacing:-0.364px;">Storm Sewers</span>
<span class="t rb" style="left:1511.40px;top:78.00px;font-size:12px;letter-spacing:0.145px;">Hydrographs</span>
<span class="t rb" style="left:1511.40px;top:102.00px;font-size:12px;letter-spacing:-0.583px;">Express</span>
<span class="t rb" style="left:1447.90px;top:125.50px;font-size:12px;letter-spacing:-0.138px;">Centro de recursos</span>
<span class="t ft" style="left:1470.95px;top:152.70px;font-size:11.5px;letter-spacing:-0.043px;font-weight:bold;">INTERFERENCIAS---REV-1*</span>
<span class="t ft" style="left:-11.40px;top:151.00px;font-size:12px;font-weight:bold;clip-path:inset(0 6.8px 0 0);">Inicio</span>
<span class="t vl" style="left:0.00px;top:182.30px;font-size:11px;letter-spacing:0.340px;">][Estructura alámbrica 2D]</span>
<span class="t cm" style="left:-0.25px;top:889.00px;font-size:13px;letter-spacing:0.050px;font-family:'Liberation Mono',monospace;">o:</span>
<span class="t cm" style="left:-0.25px;top:904.30px;font-size:13px;letter-spacing:0.050px;font-family:'Liberation Mono',monospace;">o:</span>
<span class="t cp" style="left:-0.75px;top:926.00px;font-size:12px;letter-spacing:-0.206px;font-family:'Liberation Mono',monospace;font-style:italic;">scriba un comando</span>
<span class="t bt" style="left:-10.30px;top:952.50px;font-size:12px;font-weight:bold;">Modelo</span>
<span class="t bt" style="left:55.00px;top:952.50px;font-size:12px;letter-spacing:-0.430px;">3C-301</span>
<span class="t bt" style="left:115.80px;top:952.50px;font-size:12px;letter-spacing:-0.330px;">3C-302</span>
<span class="t bt" style="left:176.50px;top:952.50px;font-size:12px;letter-spacing:-0.310px;">3C-303</span>
<span class="t bt" style="left:237.30px;top:952.50px;font-size:12px;letter-spacing:-0.300px;">3C-304</span>
<span class="t bt" style="left:298.90px;top:952.50px;font-size:12px;letter-spacing:-0.380px;">3C-305</span>
<span class="t bt" style="left:359.80px;top:952.50px;font-size:12px;letter-spacing:-0.330px;">3C-306</span>
<span class="t bt" style="left:420.70px;top:952.50px;font-size:12px;letter-spacing:-0.290px;">3C-307</span>
<span class="t bt" style="left:481.30px;top:952.50px;font-size:12px;letter-spacing:-0.033px;">Layout1</span>
<span class="t dv" style="left:1215.75px;top:322.80px;font-size:17px;letter-spacing:-0.058px;">10" PVC</span>
<span class="t dv" style="left:1169.25px;top:379.40px;font-size:17px;letter-spacing:-0.050px;">2" Corrugated HDPE</span>
<span class="t dv" style="left:1336.75px;top:412.30px;font-size:17px;letter-spacing:-0.017px;">105.233</span>
<span class="t dv" style="left:1227.90px;top:569.00px;font-size:21px;letter-spacing:-0.633px;">1.58</span>
<span class="t dv" style="left:1301.65px;top:729.90px;font-size:17px;letter-spacing:-0.017px;">103.653</span>
<span class="t dv" style="left:1219.95px;top:784.30px;font-size:17px;letter-spacing:0.170px;">6" PVC</span>
</div>
</body></html>
